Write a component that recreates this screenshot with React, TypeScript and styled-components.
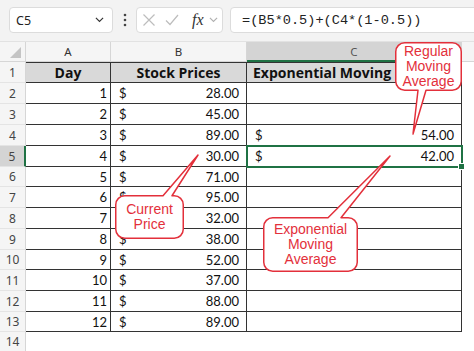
import * as React from 'react'
import styled, { createGlobalStyle } from 'styled-components'

const GREEN = '#1f7244'
const RED = '#e3303b'
const LINE = '#333'

const COLS = { a: 85, b: 136, c: 215 }

const ROW_HEIGHTS = [21, 21, 21, 21, 21, 20, 21, 21, 21, 20, 21, 21, 20]

const prices = [28, 45, 89, 30, 71, 95, 32, 38, 52, 37, 88, 89]
const ema: { [row: number]: number } = { 4: 54, 5: 42 }

const GlobalStyle = createGlobalStyle`
  html, body {
    margin: 0;
    padding: 0;
    background: #fff;
  }
  body {
    font-family: Lato, "Liberation Sans", sans-serif;
  }
`

interface TailSpec {
  side: 'top' | 'bottom'
  b1: number
  b2: number
  tx: number
  ty: number
}

interface CalloutSpec {
  left: number
  top: number
  w: number
  h: number
  lines: string[]
  tail: TailSpec
}

const callouts: CalloutSpec[] = [
  {
    left: 395,
    top: 42,
    w: 67,
    h: 49,
    lines: ['Regular', 'Moving', 'Average'],
    tail: { side: 'bottom', b1: 23, b2: 31, tx: 18, ty: 92 }
  },
  {
    left: 115,
    top: 195,
    w: 69,
    h: 44,
    lines: ['Current', 'Price'],
    tail: { side: 'top', b1: 48, b2: 57, tx: 83, ty: -40 }
  },
  {
    left: 263,
    top: 217,
    w: 95,
    h: 55,
    lines: ['Exponential', 'Moving', 'Average'],
    tail: { side: 'top', b1: 65, b2: 78, tx: 127, ty: -61 }
  }
]

// rounded box with a wedge tail on the top or bottom edge
function calloutPath(w: number, h: number, t: TailSpec) {
  const s = 0.75
  const r = 9
  const x0 = s
  const y0 = s
  const x1 = w - s
  const y1 = h - s
  const top =
    t.side === 'top'
      ? `L ${t.b1} ${y0} L ${t.tx} ${t.ty} L ${t.b2} ${y0} L ${x1 - r} ${y0}`
      : `L ${x1 - r} ${y0}`
  const bottom =
    t.side === 'bottom'
      ? `L ${t.b2} ${y1} L ${t.tx} ${t.ty} L ${t.b1} ${y1} L ${x0 + r} ${y1}`
      : `L ${x0 + r} ${y1}`
  return [
    `M ${x0 + r} ${y0}`,
    top,
    `A ${r} ${r} 0 0 1 ${x1} ${y0 + r}`,
    `L ${x1} ${y1 - r}`,
    `A ${r} ${r} 0 0 1 ${x1 - r} ${y1}`,
    bottom,
    `A ${r} ${r} 0 0 1 ${x0} ${y1 - r}`,
    `L ${x0} ${y0 + r}`,
    `A ${r} ${r} 0 0 1 ${x0 + r} ${y0}`,
    'Z'
  ].join(' ')
}

const Callout = ({ spec }: { spec: CalloutSpec }) => (
  <CalloutBox style={{ left: spec.left, top: spec.top, width: spec.w, height: spec.h }}>
    <CalloutShape width={spec.w} height={spec.h}>
      <path d={calloutPath(spec.w, spec.h, spec.tail)} fill="#fff" stroke={RED} strokeWidth={1.5} strokeLinejoin="round" />
    </CalloutShape>
    <CalloutText>
      {spec.lines.map(l => (
        <span key={l}>{l}</span>
      ))}
    </CalloutText>
  </CalloutBox>
)

const XIcon = () => (
  <svg width="14" height="14" viewBox="0 0 14 14">
    <path d="M1.5 1.5 L12.5 12.5 M12.5 1.5 L1.5 12.5" stroke="#bdbdbd" strokeWidth="1.2" fill="none" />
  </svg>
)

const CheckIcon = () => (
  <svg width="14" height="14" viewBox="0 0 14 14">
    <path d="M1 7.5 L5 11.5 L13 2" stroke="#bdbdbd" strokeWidth="1.2" fill="none" />
  </svg>
)

const Chevron = ({ color, size }: { color: string; size: number }) => (
  <svg width={size} height={size * 0.6} viewBox="0 0 10 6">
    <path d="M1 1 L5 5 L9 1" stroke={color} strokeWidth="1.3" fill="none" />
  </svg>
)

const VDots = () => (
  <svg width="4" height="14" viewBox="0 0 4 14">
    <circle cx="2" cy="2" r="1.3" fill="#444" />
    <circle cx="2" cy="7" r="1.3" fill="#444" />
    <circle cx="2" cy="12" r="1.3" fill="#444" />
  </svg>
)

export default function App() {
  return (
    <Page>
      <GlobalStyle />
      <TopBar>
        <NameBox>
          <span>C5</span>
          <Chevron color="#333" size={9} />
        </NameBox>
        <DotsSlot>
          <VDots />
        </DotsSlot>
        <FxBox>
          <XIcon />
          <CheckIcon />
          <FxLabel>fx</FxLabel>
          <Chevron color="#b0b0b0" size={9} />
        </FxBox>
        <FormulaBox>=(B5*0.5)+(C4*(1-0.5))</FormulaBox>
      </TopBar>

      <HeaderRow>
        <Corner>
          <CornerTriangle />
        </Corner>
        <ColHeader w={COLS.a}>A</ColHeader>
        <ColHeader w={COLS.b}>B</ColHeader>
        <ColHeader w={COLS.c} active>
          C
        </ColHeader>
        <ColHeaderRest />
      </HeaderRow>

      {ROW_HEIGHTS.map((h, i) => {
        const row = i + 1
        const first = row === 1
        return (
          <GridRow key={row} h={h}>
            <RowHead active={row === 5}>{row}</RowHead>
            {first ? (
              <>
                <Cell w={COLS.a} fill bold center first>
                  Day
                </Cell>
                <Cell w={COLS.b} fill bold center first>
                  Stock Prices
                </Cell>
                <Cell w={COLS.c} fill bold first>
                  <Clip>Exponential Moving</Clip>
                </Cell>
              </>
            ) : (
              <>
                <Cell w={COLS.a} right>
                  {row - 1}
                </Cell>
                <Cell w={COLS.b}>
                  <Money>
                    <span>$</span>
                    <span>{prices[row - 2].toFixed(2)}</span>
                  </Money>
                </Cell>
                <Cell w={COLS.c} selected={row === 5}>
                  {ema[row] !== undefined && (
                    <Money>
                      <span>$</span>
                      <span>{ema[row].toFixed(2)}</span>
                    </Money>
                  )}
                  {row === 5 && <Handle />}
                </Cell>
              </>
            )}
            <Rest />
          </GridRow>
        )
      })}

      <GridRow h={20}>
        <RowHead>14</RowHead>
        <Rest />
      </GridRow>

      {callouts.map(c => (
        <Callout key={c.lines.join()} spec={c} />
      ))}
    </Page>
  )
}

const Page = styled.div`
  position: relative;
  width: 474px;
  height: 351px;
  overflow: hidden;
  background: #fff;
`

const TopBar = styled.div`
  display: flex;
  align-items: flex-start;
  height: 42px;
  box-sizing: border-box;
  padding: 7px 0 0 9px;

  background: #f3f3f3;
  border-bottom: 1px solid #e2e2e2;
`

const NameBox = styled.div`
  display: flex;
  align-items: center;
  justify-content: space-between;
  width: 104px;
  height: 26px;
  box-sizing: border-box;
  padding: 0 8px 0 6px;

  font: 12.5px 'Noto Sans', sans-serif;
  color: #222;
  background: #fff;
  border: 1px solid #dcdcdc;
  border-radius: 4px;
`

const DotsSlot = styled.div`
  display: flex;
  align-items: center;
  justify-content: center;
  width: 23px;
  height: 26px;
`

const FxBox = styled.div`
  display: flex;
  align-items: center;
  gap: 9px;
  width: 87px;
  height: 26px;
  box-sizing: border-box;
  padding-left: 5px;

  background: #fff;
  border: 1px solid #dcdcdc;
  border-radius: 4px;

  & > :nth-child(3) {
    margin-left: 4px;
  }
  & > :nth-child(4) {
    margin-left: -4px;
  }
`

const FxLabel = styled.span`
  font: italic 16px 'Liberation Serif', serif;
  color: #333;
  line-height: 1;
`

const FormulaBox = styled.div`
  flex: 1;
  height: 26px;
  box-sizing: border-box;
  margin: 0 -8px 0 7px;
  padding-left: 11px;
  display: flex;
  align-items: center;

  font: 13.6px 'Liberation Mono', monospace;
  color: #222;
  background: #fff;
  border: 1px solid #dcdcdc;
  border-radius: 4px;
`

const HeaderRow = styled.div`
  display: flex;
  height: 20px;
  background: #f5f5f5;
`

const Corner = styled.div`
  position: relative;
  width: 26px;
  box-sizing: border-box;
  border-right: 1px solid #d6d6d6;
  border-bottom: 1px solid #d6d6d6;
`

const CornerTriangle = styled.div`
  position: absolute;
  right: 4px;
  bottom: 3px;
  width: 0;
  height: 0;
  border-left: 11px solid transparent;
  border-bottom: 11px solid #c4c4c4;
`

const ColHeader = styled.div<{ w: number; active?: boolean }>`
  width: ${p => p.w}px;
  box-sizing: border-box;
  display: flex;
  align-items: center;
  justify-content: center;

  font: 11.5px 'Noto Sans', sans-serif;
  color: ${p => (p.active ? '#555' : '#333')};
  background: ${p => (p.active ? '#d4d4d4' : '#f5f5f5')};
  border-right: 1px solid #d6d6d6;
  border-bottom: ${p => (p.active ? `2px solid ${GREEN}` : '1px solid #d6d6d6')};
`

const ColHeaderRest = styled.div`
  flex: 1;
  border-bottom: 1px solid #d6d6d6;
`

const GridRow = styled.div<{ h: number }>`
  display: flex;
  height: ${p => p.h}px;
`

const RowHead = styled.div<{ active?: boolean }>`
  width: 26px;
  flex: none;
  box-sizing: border-box;
  display: flex;
  align-items: center;
  justify-content: center;

  font: 12px 'Noto Sans', sans-serif;
  color: #444;
  background: ${p => (p.active ? '#d4d4d4' : '#f5f5f5')};
  border-right: ${p => (p.active ? `2px solid ${GREEN}` : '1px solid #d6d6d6')};
  border-bottom: 1px solid #e4e4e4;
`

const Cell = styled.div<{
  w: number
  fill?: boolean
  bold?: boolean
  center?: boolean
  right?: boolean
  first?: boolean
  selected?: boolean
}>`
  position: relative;
  width: ${p => p.w}px;
  flex: none;
  box-sizing: border-box;
  display: flex;
  align-items: center;
  justify-content: ${p => (p.center ? 'center' : p.right ? 'flex-end' : 'flex-start')};
  padding: 0 ${p => (p.right ? 3 : 0)}px 0 ${p => (p.center || p.right ? 0 : 6)}px;
  overflow: ${p => (p.selected ? 'visible' : 'hidden')};

  font-family: ${p => (p.bold ? "'Open Sans', sans-serif" : 'Lato, sans-serif')};
  font-size: ${p => (p.bold ? 14 : 13)}px;
  font-weight: ${p => (p.bold ? 700 : 400)};
  color: #111;
  background: ${p => (p.fill ? '#d9d9d9' : '#fff')};
  border-right: 1px solid ${LINE};
  border-bottom: 1px solid ${LINE};
  border-top: ${p => (p.first ? `1px solid ${LINE}` : 'none')};
  z-index: ${p => (p.selected ? 1 : 0)};
  outline: ${p => (p.selected ? `2px solid ${GREEN}` : 'none')};
  outline-offset: -1px;
`

const Clip = styled.span`
  white-space: nowrap;
`

const Money = styled.div`
  display: flex;
  justify-content: space-between;
  flex: 1;
  padding: 0 7px 0 2px;
`

const Handle = styled.div`
  position: absolute;
  right: -4px;
  bottom: -4px;
  width: 5px;
  height: 5px;
  background: ${GREEN};
  border: 1px solid #fff;
`

const Rest = styled.div`
  flex: 1;
`

const CalloutBox = styled.div`
  position: absolute;
  z-index: 5;
`

const CalloutShape = styled.svg`
  position: absolute;
  left: 0;
  top: 0;
  overflow: visible;
`

const CalloutText = styled.div`
  position: relative;
  display: flex;
  flex-direction: column;
  align-items: center;
  justify-content: center;
  height: 100%;

  font: 14px 'Liberation Sans', Arial, sans-serif;
  line-height: 15px;
  color: ${RED};
`
